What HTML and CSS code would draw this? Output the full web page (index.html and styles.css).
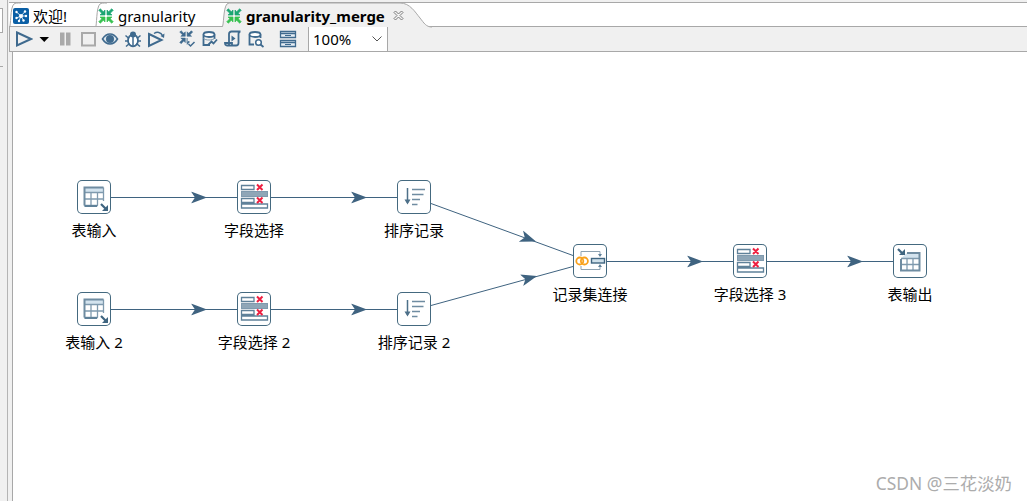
FILE: index.html
```html
<!DOCTYPE html>
<html lang="zh">
<head>
<meta charset="utf-8">
<title>granularity_merge</title>
<link rel="stylesheet" href="styles.css">
</head>
<body>
<svg class="defs" width="0" height="0" aria-hidden="true">
  <defs>
    <symbol id="merge-arrows" viewBox="0 0 16 16">
      <g fill="#1ba672" stroke="#1ba672" stroke-width=".7">
        <path d="M7 7V2L5.300 3.700 2.300.8.800 2.300l3 3L2 7z"/>
        <path d="M9 7V2l1.700 1.700 3-2.900 1.500 1.500-3 3L14 7z"/>
      </g>
      <g fill="#35c14f" stroke="#35c14f" stroke-width=".7">
        <path d="M7 9v5l-1.700-1.700-3 2.900-1.500-1.500 3-3L2 9z"/>
        <path d="M9 9v5l1.700-1.700 3 2.900 1.500-1.500-3-3L14 9z"/>
      </g>
    </symbol>
    <symbol id="node-table-in" viewBox="0 0 34 34">
      <rect x="7.500" y="7.500" width="19" height="5" fill="#d3e3ee"/>
      <path d="M7.500 12.500H26.500M7.500 19H26.500M14 12.500V25.500M20.500 12.500V25.500M26.500 7.500V21M7.500 25.500H21" fill="none" stroke="#7f9aae" stroke-width="1.300"/>
      <path d="M7.500 25.500V7.500H26.500" fill="none" stroke="#6f8ca1" stroke-width="2"/>
      <path d="M7.500 26H20" stroke="#5f8199" stroke-width="2"/>
      <path d="M24 24l5.500 5.500" stroke="#3f6580" stroke-width="2.200"/>
      <path d="M31 25V31H25z" fill="#3f6580"/>
    </symbol>
    <symbol id="node-table-out" viewBox="0 0 34 34">
      <path d="M13 9.500H26V14H8.500z" fill="#d3e3ee"/>
      <path d="M8 14.500H26M8 20.500H26M14 14.500V26M20 14.500V26" fill="none" stroke="#7f9aae" stroke-width="1.300"/>
      <path d="M14 9H26.500V26.500H8V15" fill="none" stroke="#6f8ca1" stroke-width="2"/>
      <path d="M5 5l5.500 5.500" stroke="#3f6580" stroke-width="2.200"/>
      <path d="M12 11H6L12 5z" fill="#3f6580"/>
    </symbol>
    <symbol id="node-select" viewBox="0 0 34 34">
      <rect x="4.500" y="11.500" width="26" height="5" fill="#8fa6b7" stroke="#7f9aae"/>
      <path d="M4.500 5.500H17V9.500H4.500zM4.500 18.500H17V22.500H4.500zM4.500 24H30.500V28H4.500z" fill="#fff" stroke="#5f8199" stroke-width="1.300"/>
      <path d="M20 4.500l5.500 5.500M25.500 4.500 20 10M20 17.500l5.500 5.500M25.500 17.500 20 23" stroke="#ee1f40" stroke-width="2"/>
    </symbol>
    <symbol id="node-sort" viewBox="0 0 34 34">
      <path d="M10.500 8v15" stroke="#4d7089" stroke-width="1.500"/>
      <path d="M7.500 19.500h6l-3 5z" fill="#4d7089"/>
      <path d="M15 9.500H28M15 14.500H26.500M15 19.500H23M15 24.500H20.500" stroke="#6f8ca1" stroke-width="1.600"/>
    </symbol>
    <symbol id="node-merge" viewBox="0 0 34 34">
      <path d="M8 12V7.500H27V12M8 22V25.500H27V21" fill="none" stroke="#8fa3b2"/>
      <path d="M25 10h4l-2 3zM25 23h4l-2-3z" fill="#5f8199"/>
      <circle cx="6.800" cy="17" r="3.500" fill="none" stroke="#f9a11b" stroke-width="1.800"/>
      <circle cx="11.400" cy="17" r="3.500" fill="none" stroke="#f9a11b" stroke-width="1.800"/>
      <rect x="18.500" y="14.500" width="13" height="4.500" fill="#cfe0ea" stroke="#3f6580" stroke-width="1.400"/>
    </symbol>
    <symbol id="arrowhead" viewBox="-16 -6 16 12">
      <path d="M-16-6 0 0-16 6-12 0z" fill="#3f6380"/>
    </symbol>
  </defs>
</svg>

<div class="app">
  <aside class="gutter"><div class="gutter-box"></div><div class="gutter-rule"></div></aside>
  <main class="editor">
    <nav class="tabs">
      <div class="tab tab-first">
        <svg class="tab-edge" width="12" height="25" viewBox="0 0 12 25"><path d="M.500 25C2 25 1 5 5 2c1-1 3-1 7-1" fill="#fff" stroke="#a8a8a8"/></svg>
        <svg class="tab-icon" width="16" height="16" viewBox="0 0 16 16">
          <rect width="16" height="16" rx="2" fill="#0b5fa5"/>
          <path d="M8 8 3.500 4M8 8 12 3.500M8 8h5M8 8l-4.500 2M8 8l2.500 4.500M8 8 6 13" stroke="#cfe4f5" stroke-width="1"/>
          <circle cx="8" cy="8" r="2" fill="#fff"/>
          <circle cx="3.500" cy="4" r="1.200" fill="#fff"/><circle cx="12" cy="3.500" r="1.200" fill="#fff"/><circle cx="13" cy="8" r="1.200" fill="#fff"/><circle cx="3.500" cy="10" r="1.200" fill="#fff"/><circle cx="10.500" cy="12.500" r="1.200" fill="#fff"/><circle cx="6" cy="13" r="1.200" fill="#fff"/>
        </svg>
        <span>欢迎!</span>
      </div>
      <div class="tab tab-second">
        <svg class="tab-edge" width="12" height="25" viewBox="0 0 12 25"><path d="M.500 25C2 25 1 5 5 2c1-1 3-1 7-1" fill="#fff" stroke="#a8a8a8"/></svg>
        <svg class="tab-icon" width="16" height="16"><use href="#merge-arrows"/></svg>
        <span>granularity</span>
      </div>
      <div class="tab tab-active">
        <svg class="tab-shape" width="210" height="26" viewBox="0 0 210 26"><path d="M0 25C2 25 1 6 5 2c1-1 3-1 6-1H178c10 0 15 9 20 15 4 5 6 9 12 9" fill="#f0f0f0" stroke="#a8a8a8"/></svg>
        <svg class="tab-icon" width="16" height="16"><use href="#merge-arrows"/></svg>
        <span class="tab-title">granularity_merge</span>
        <svg class="tab-close" width="11" height="11" viewBox="0 0 11 11"><path d="M1 2.500 2.500 1 5.500 4 8.500 1 10 2.500 7 5.500 10 8.500 8.500 10 5.500 7 2.500 10 1 8.500 4 5.500z" fill="#f4f4f4" stroke="#7a7a7a"/></svg>
      </div>
    </nav>

    <div class="toolbar">
      <svg class="tool" width="18" height="18" viewBox="0 0 18 18"><path d="M2 2.500 16 9 2 15.500z" fill="none" stroke="#3f6a8e" stroke-width="2"/></svg>
      <svg class="tool tool-drop" width="12" height="18" viewBox="0 0 12 18"><path d="M1.500 7h9.500L6.250 12z" fill="#000"/></svg>
      <svg class="tool" width="18" height="18" viewBox="0 0 18 18"><path d="M5 2.500h4.500v13H5zM11 2.500h4.500v13H11z" fill="#a9a9a9"/></svg>
      <svg class="tool" width="18" height="18" viewBox="0 0 18 18"><rect x="4" y="3" width="13" height="12.500" fill="none" stroke="#a9a9a9" stroke-width="2"/></svg>
      <svg class="tool" width="18" height="18" viewBox="0 0 18 18"><path d="M1.500 9C4 5 6.500 4 9 4s5 1 7.500 5c-2.500 4-5 5-7.500 5s-5-1-7.500-5z" fill="#dbe6ee" stroke="#3f6a8e" stroke-width="1.600"/><circle cx="9" cy="9" r="4" fill="#3f6a8e"/></svg>
      <svg class="tool" width="18" height="18" viewBox="0 0 18 18"><ellipse cx="9" cy="10.500" rx="5" ry="5.800" fill="#fff" stroke="#3f6a8e" stroke-width="1.800"/><circle cx="9" cy="4.500" r="3" fill="#3f6a8e"/><path d="M9 6v10M1.500 5.500l3.500 3M16.500 5.500 13 8.500M1 11h3.500M17 11h-3.500M2 16.500l3.500-3M16 16.500l-3.500-3" stroke="#3f6a8e" stroke-width="1.500" fill="none"/></svg>
      <svg class="tool" width="18" height="18" viewBox="0 0 18 18"><path d="M2 4 14.500 10 2 16z" fill="none" stroke="#3f6a8e" stroke-width="2"/><path d="M7 3.500C10 1.500 14 2 15.500 5.500" fill="none" stroke="#3f6a8e" stroke-width="1.500"/><path d="M17.500 3.500l-.5 4.500-3.500-2z" fill="#3f6a8e"/></svg>

      <svg class="tool tool-group" width="18" height="18" viewBox="0 0 18 18"><g transform="translate(1 0) scale(.9)" stroke="#3f6a8e" stroke-width=".6"><path d="M7 7V2L5.300 3.700 2.300.8.800 2.300l3 3L2 7zM9 7V2l1.700 1.700 3-2.900 1.500 1.500-3 3L14 7zM7 9v5l-1.700-1.700-3 2.900-1.500-1.500 3-3L2 9zM9 9v5l1.700-1.700 1 1L9 16z" fill="#3f6a8e"/></g><path d="M10.500 14l2 2 4-4" fill="none" stroke="#3f6a8e" stroke-width="1.500"/></svg>
      <svg class="tool" width="18" height="18" viewBox="0 0 18 18"><path d="M2.500 4.500V15H9M13.500 4.500V9" fill="none" stroke="#3f6a8e" stroke-width="1.800"/><ellipse cx="8" cy="4.500" rx="5.500" ry="2.500" fill="#fff" stroke="#3f6a8e" stroke-width="1.800"/><path d="M2.500 8.500c2 2 9 2 11 0" fill="none" stroke="#7f9aae"/><path d="M7 15l3.500-3.500 2 2L16 9.500" fill="none" stroke="#3f6a8e" stroke-width="1.800"/></svg>
      <svg class="tool" width="18" height="18" viewBox="0 0 18 18"><path d="M5 15.500V4c0-1.500 1-2.500 2.500-2.500H16.500c-1.500 0-2 1-2 2.500v9c0 1.500-1 2.500-2.500 2.500H3c-1.500 0-2-1-2-2.500h7v2" fill="none" stroke="#3f6a8e" stroke-width="1.800"/><path d="M7.500 5.500l4 3-4 3z" fill="#3f6a8e"/></svg>
      <svg class="tool" width="18" height="18" viewBox="0 0 18 18"><path d="M2.500 4.500V14.500H7M13.500 4.500V8" fill="none" stroke="#3f6a8e" stroke-width="1.800"/><ellipse cx="8" cy="4.500" rx="5.500" ry="2.500" fill="#fff" stroke="#3f6a8e" stroke-width="1.800"/><circle cx="11.500" cy="12.500" r="2.800" fill="#fff" stroke="#3f6a8e" stroke-width="1.500"/><path d="M13.500 14.500l3 2.500" stroke="#3f6a8e" stroke-width="1.800"/></svg>

      <svg class="tool tool-layout" width="18" height="18" viewBox="0 0 18 18"><path d="M1.500 1.500H16.500V7.500H1.500zM1.500 10.500H16.500V16.500H1.500z" fill="#e6eef4" stroke="#3f6a8e" stroke-width="1.300"/><path d="M1.500 3.500H16.500M1.500 12.500H16.500" stroke="#3f6a8e" stroke-width="1.400"/><path d="M6 5.500H12M6 14.500H12" stroke="#3f6a8e"/></svg>

      <div class="zoom-box">
        <span>100%</span>
        <svg width="10" height="6" viewBox="0 0 10 6"><path d="M.5.500 5 5 9.500.500" fill="none" stroke="#555"/></svg>
      </div>
    </div>

    <section class="canvas">
      <svg class="edges" width="1015" height="449" viewBox="12 52 1015 449">
        <g stroke="#3f6380" stroke-width="1" fill="none">
          <path d="M111 197.500H237M271 197.500H397M111 309.500H237M271 309.500H397M607 261.500H733M767 261.500H893"/>
          <path d="M431 203.500 573 255.500M431 305.500 573 266.500"/>
        </g>
        <use href="#arrowhead" x="-16" y="-6" width="16" height="12" transform="translate(207 197.500)"/>
        <use href="#arrowhead" x="-16" y="-6" width="16" height="12" transform="translate(367 197.500)"/>
        <use href="#arrowhead" x="-16" y="-6" width="16" height="12" transform="translate(207 309.500)"/>
        <use href="#arrowhead" x="-16" y="-6" width="16" height="12" transform="translate(367 309.500)"/>
        <use href="#arrowhead" x="-16" y="-6" width="16" height="12" transform="translate(703 261.500)"/>
        <use href="#arrowhead" x="-16" y="-6" width="16" height="12" transform="translate(863 261.500)"/>
        <use href="#arrowhead" x="-16" y="-6" width="16" height="12" transform="translate(536 241.500) rotate(20)"/>
        <use href="#arrowhead" x="-16" y="-6" width="16" height="12" transform="translate(537 276) rotate(-15.400)"/>
      </svg>

      <div class="node col-a row-top"><svg class="step" width="34" height="34"><use href="#node-table-in"/></svg><span>表输入</span></div>
      <div class="node col-b row-top"><svg class="step" width="34" height="34"><use href="#node-select"/></svg><span>字段选择</span></div>
      <div class="node col-c row-top"><svg class="step" width="34" height="34"><use href="#node-sort"/></svg><span>排序记录</span></div>
      <div class="node col-a row-bottom"><svg class="step" width="34" height="34"><use href="#node-table-in"/></svg><span>表输入 2</span></div>
      <div class="node col-b row-bottom"><svg class="step" width="34" height="34"><use href="#node-select"/></svg><span>字段选择 2</span></div>
      <div class="node col-c row-bottom"><svg class="step" width="34" height="34"><use href="#node-sort"/></svg><span>排序记录 2</span></div>
      <div class="node col-d row-mid"><svg class="step" width="34" height="34"><use href="#node-merge"/></svg><span>记录集连接</span></div>
      <div class="node col-e row-mid"><svg class="step" width="34" height="34"><use href="#node-select"/></svg><span>字段选择 3</span></div>
      <div class="node col-f row-mid"><svg class="step" width="34" height="34"><use href="#node-table-out"/></svg><span>表输出</span></div>

      <div class="watermark">CSDN @三花淡奶</div>
    </section>
  </main>
</div>
</body>
</html>
```
FILE: styles.css
```css
* { box-sizing: border-box; }
html, body { margin: 0; height: 100%; overflow: hidden; }
body {
  font-family: "Noto Sans", "Noto Sans CJK SC", sans-serif;
  color: #000;
  background: #f0f0f0;
}
.defs { position: absolute; }
.app { display: flex; width: 1027px; height: 501px; }
.gutter {
  width: 8px;
  flex: none;
  padding-top: 8px;
  background: #f0f0f0;
  border-right: 1px solid #b4b4b4;
}
.gutter-box {
  width: 3px;
  height: 25px;
  background: #fff;
  border: 1px solid #a8a8a8;
  border-left: 0;
}
.gutter-rule {
  width: 3px;
  height: 1px;
  margin-top: 33px;
  background: #a8a8a8;
}
.editor { flex: 1; display: flex; flex-direction: column; min-width: 0; }

/* Tab strip */
.tabs {
  height: 27px;
  flex: none;
  display: flex;
  margin-left: 1px;
  padding-top: 2px;
  background: #fff;
  border-top: 2px solid #f0f0f0;
  box-shadow: inset 0 1px 0 #a8a8a8;
  border-bottom: 1px solid #a8a8a8;
  position: relative;
}
.tab {
  position: relative;
  display: flex;
  align-items: center;
  height: 23px;
  font-size: 15px;
  line-height: 20px;
}
.tab-first { width: 86px; padding-left: 4px; }
.tab-second { width: 127px; padding-left: 3px; }
.tab-active { width: 208px; padding-left: 4px; font-weight: 700; }
.tab-edge { position: absolute; left: 0; top: -2px; }
.tab-shape { position: absolute; left: 0; top: -2px; }
.tab-icon { position: relative; flex: none; margin-right: 4px; }
.tab span { position: relative; white-space: nowrap; }
.tab-close { position: relative; flex: none; margin-left: 8px; }

/* Toolbar */
.toolbar {
  height: 25px;
  flex: none;
  display: flex;
  align-items: center;
  gap: 5px;
  margin-left: 1px;
  padding-left: 5px;
  background: #f0f0f0;
  border-left: 1px solid #a8a8a8;
  border-bottom: 1px solid #a8a8a8;
}
.tool { flex: none; }
.tool-group { margin-left: 8px; }
.tool-layout { margin-left: 9px; }
.zoom-box {
  width: 80px;
  height: 24px;
  margin-left: 6px;
  padding: 0 5px 0 4px;
  display: flex;
  align-items: center;
  justify-content: space-between;
  background: #fff;
  border-left: 1px solid #a8a8a8;
  border-right: 1px solid #a8a8a8;
  font-size: 15px;
}

/* Canvas */
.canvas {
  position: relative;
  flex: 1;
  margin-left: 4px;
  background: #fff;
  box-shadow: inset 1px 0 0 #a8a8a8;
}
.edges { position: absolute; left: 0; top: 0; }
.node {
  position: absolute;
  width: 120px;
  display: flex;
  flex-direction: column;
  align-items: center;
  gap: 7px;
  font-size: 15px;
  line-height: 18px;
  white-space: nowrap;
}
.step {
  background: #fff;
  box-shadow: inset 0 0 0 1px #44697f;
  border-radius: 5px;
  flex: none;
}
.col-a { left: 22px; }
.col-b { left: 182px; }
.col-c { left: 342px; }
.col-d { left: 518px; }
.col-e { left: 678px; }
.col-f { left: 838px; }
.row-top { top: 128px; }
.row-mid { top: 192px; }
.row-bottom { top: 240px; }
.watermark {
  position: absolute;
  right: 15px;
  bottom: 7px;
  font-size: 17.4px;
  line-height: 22px;
  color: #acacac;
  white-space: nowrap;
}
```
